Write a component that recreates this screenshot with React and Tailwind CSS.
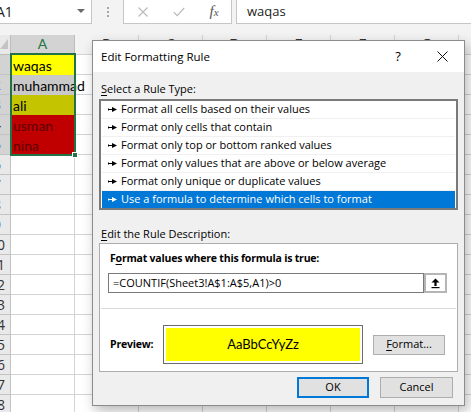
import React from 'react';

const rowNums = Array.from({ length: 18 }, (_, i) => i + 1);
const otherCols = ['B', 'C', 'D', 'E', 'F', 'G', 'H'];

// filled cells of column A
const cells = {
  1: { text: 'waqas', cls: 'bg-[#ffff00] border-[#ffff00] text-black' },
  2: { text: 'muhammad', cls: 'bg-[#c9c9c9] border-[#c9c9c9] text-black' },
  3: { text: 'ali', cls: 'bg-[#c4c400] border-[#c4c400] text-black' },
  4: { text: 'usman', cls: 'bg-[#c00000] border-[#c00000] text-[#5c0000]' },
  5: { text: 'nina', cls: 'bg-[#c00000] border-[#c00000] text-[#5c0000]' },
};

const rules = [
  'Format all cells based on their values',
  'Format only cells that contain',
  'Format only top or bottom ranked values',
  'Format only values that are above or below average',
  'Format only unique or duplicate values',
  'Use a formula to determine which cells to format',
];

const RuleArrow = () => (
  <svg width="9" height="7" viewBox="0 0 9 7" className="shrink-0">
    <rect x="0" y="2.5" width="1" height="2" fill="currentColor" />
    <rect x="0" y="3" width="5" height="1" fill="currentColor" />
    <path d="M4 1 L9 3.5 L4 6 Z" fill="currentColor" />
  </svg>
);

function Sheet() {
  return (
    <div className="relative flex flex-col font-['Lato','Liberation_Sans',sans-serif]">
      {/* column headers */}
      <div className="flex h-[20px] shrink-0">
        <div className="w-[11px] shrink-0 border-r border-b border-[#bdbdbd] bg-[#e9e9e9] flex items-center">
          <svg width="10" height="19" viewBox="0 0 10 19">
            <path d="M8 4 L8 14 L0 14 Z" fill="#c4c4c4" />
          </svg>
        </div>
        <div className="w-[64px] shrink-0 border-r border-b border-[#bdbdbd] bg-[#d3d3d3] text-center text-[14px] leading-[18px] text-[#217346]">
          A
        </div>
        {otherCols.map((c) => (
          <div
            key={c}
            className="w-[64px] shrink-0 border-r border-b border-[#d4d4d4] bg-[#f3f3f3] text-center text-[14px] leading-[18px] text-[#333]"
          >
            {c}
          </div>
        ))}
      </div>

      {rowNums.map((n) => {
        const cell = cells[n];
        return (
          <div key={n} className="flex h-[20px] shrink-0">
            <div
              className={`w-[11px] shrink-0 overflow-hidden border-r border-b border-[#c3c3c3] ${
                cell ? 'bg-[#d3d3d3]' : 'bg-[#e9e9e9]'
              }`}
            >
              <div className="w-[24px] -ml-[15px] text-center text-[14px] leading-[19px] text-[#333] font-['Open_Sans',sans-serif]">
                {n}
              </div>
            </div>
            <div
              className={`w-[64px] shrink-0 border-r border-b flex items-center ${
                cell ? cell.cls : 'border-[#d4d4d4]'
              }`}
            >
              {cell && (
                <span className="relative z-10 whitespace-nowrap pl-[2px] pt-[1px] text-[14px] leading-[19px]">
                  {cell.text}
                </span>
              )}
            </div>
            {otherCols.map((c) => (
              <div key={c} className="w-[64px] shrink-0 border-r border-b border-[#d4d4d4]" />
            ))}
          </div>
        );
      })}

      {/* selection A1:A5 */}
      <div className="absolute left-[10px] top-[18px] w-[66px] h-[103px] border-2 border-[#217346] z-20" />
      <div className="absolute left-[72px] top-[117px] w-[6px] h-[6px] bg-[#217346] border border-white z-20" />
    </div>
  );
}

function FormulaBar() {
  return (
    <div className="h-[35px] shrink-0 bg-[#f3f3f3] flex items-start font-['Open_Sans',sans-serif]">
      <div className="w-[92px] h-[24px] shrink-0 bg-white border-r border-b border-[#c6c6c6] flex items-center overflow-hidden">
        <span className="-ml-[4px] flex-1 text-[14px] text-[#222]">A1</span>
        <svg width="8" height="5" viewBox="0 0 8 5" className="mr-[6px]">
          <path d="M0 0 L8 0 L4 4 Z" fill="#6a6a6a" />
        </svg>
      </div>
      <div className="w-[31px] h-[24px] shrink-0 flex flex-col items-center justify-center gap-[2px]">
        <span className="w-[2px] h-[2px] bg-[#a6a6a6]" />
        <span className="w-[2px] h-[2px] bg-[#a6a6a6]" />
        <span className="w-[2px] h-[2px] bg-[#a6a6a6]" />
      </div>
      <div className="w-[109px] h-[24px] shrink-0 bg-white border-x border-b border-[#c6c6c6] flex items-center">
        <div className="w-[36px] flex justify-center ml-[1px]">
          <svg width="10" height="10" viewBox="0 0 10 10">
            <path d="M0.5 0.5 L9.5 9.5 M9.5 0.5 L0.5 9.5" stroke="#bcbcbc" strokeWidth="1.2" />
          </svg>
        </div>
        <div className="w-[36px] flex justify-center">
          <svg width="12" height="10" viewBox="0 0 12 10">
            <path d="M0.8 5.2 L4.2 8.6 L11.2 1" stroke="#bcbcbc" strokeWidth="1.3" fill="none" />
          </svg>
        </div>
        <div className="w-[34px] flex justify-center">
          <span className="italic font-['Liberation_Serif',serif] text-[15px] leading-none text-[#555]">
            f<span className="text-[11px]">x</span>
          </span>
        </div>
      </div>
      <div className="flex-1 h-[24px] ml-[4px] bg-white border-l border-b border-[#c6c6c6] flex items-center pl-[10px] text-[13px] text-[#222]">
        waqas
      </div>
    </div>
  );
}

function Dialog() {
  return (
    <div className="absolute left-[92px] top-[40px] w-[373px] h-[366px] border border-[#8c8c8c] bg-[#f0f0f0] shadow-[3px_5px_12px_rgba(0,0,0,0.28)] flex flex-col text-[11px] text-black font-['Open_Sans','Noto_Sans',sans-serif] z-30">
      {/* title bar */}
      <div className="h-[31px] shrink-0 bg-white flex items-center">
        <div className="flex-1 pl-[8px] text-[11.5px]">Edit Formatting Rule</div>
        <div className="w-[44px] text-center text-[13px] leading-none">?</div>
        <div className="w-[44px] flex justify-center">
          <svg width="11" height="11" viewBox="0 0 11 11">
            <path d="M0.5 0.5 L10.5 10.5 M10.5 0.5 L0.5 10.5" stroke="#111" strokeWidth="1" />
          </svg>
        </div>
      </div>

      <div className="flex flex-col px-[6px] pt-[9px]">
        <div className="ml-[2px] leading-[16px]">
          <span className="underline underline-offset-2">S</span>elect a Rule Type:
        </div>

        <div className="mt-[2px] border-2 border-[#7a7a7a] bg-white px-px">
          {rules.map((r, i) => {
            const last = i === rules.length - 1;
            return (
              <div
                key={r}
                className={`flex items-center gap-[4px] pl-[6px] ${
                  last ? 'h-[17px] bg-[#0078d7] text-white' : 'h-[18px] border-b border-[#f0f0f0]'
                }`}
              >
                <RuleArrow />
                <span className="whitespace-nowrap">{r}</span>
              </div>
            );
          })}
        </div>

        <div className="mt-[16px] ml-[2px] leading-[16px]">
          <span className="underline underline-offset-2">E</span>dit the Rule Description:
        </div>

        <div className="mt-[1px] border border-[#adadad] bg-white flex flex-col pb-[7px]">
          <div className="pt-[7px] pl-[10px] leading-[15px] font-bold text-[10.5px] tracking-[-0.2px]">
            F<span className="underline underline-offset-2">o</span>rmat values where this formula is true:
          </div>
          <div className="mt-[7px] pl-[8px] flex">
            <div className="w-[316px] h-[20px] border border-[#7a7a7a] bg-white flex items-center pl-[4px] whitespace-nowrap">
              =COUNTIF(Sheet3!A$1:A$5,A1)&gt;0
            </div>
            <div className="w-[23px] h-[20px] border-2 border-[#b5b5b5] bg-white flex items-center justify-center">
              <svg width="9" height="11" viewBox="0 0 9 11">
                <path d="M4.5 0.5 L8.5 4.5 L5.6 4.5 L5.6 8 L3.4 8 L3.4 4.5 L0.5 4.5 Z" fill="#000" />
                <rect x="0.5" y="9" width="8" height="1.2" fill="#000" />
              </svg>
            </div>
          </div>
          <div className="mt-[15px] mx-[1px] h-px bg-[#d9d9d9]" />
          <div className="mt-[16px] pl-[10px] flex items-center">
            <div className="w-[53px] font-bold text-[10.5px] tracking-[-0.2px]">Preview:</div>
            <div className="w-[200px] h-[39px] border border-[#6b6b6b] bg-white p-[2px]">
              <div className="w-full h-full bg-[#ffff00] flex items-center justify-center font-['Lato','Liberation_Sans',sans-serif] text-[13px]">
                AaBbCcYyZz
              </div>
            </div>
            <div className="ml-[10px] w-[72px] h-[20px] border border-[#adadad] bg-[#e1e1e1] flex items-center justify-center">
              <span className="underline underline-offset-2">F</span>ormat...
            </div>
          </div>
        </div>

        <div className="mt-[5px] mr-[5px] flex justify-end gap-[11px]">
          <div className="w-[72px] h-[21px] border-2 border-[#0078d7] bg-[#e1e1e1] flex items-center justify-center">
            OK
          </div>
          <div className="w-[73px] h-[21px] border border-[#adadad] bg-[#e1e1e1] flex items-center justify-center">
            Cancel
          </div>
        </div>
      </div>
    </div>
  );
}

export default function App() {
  return (
    <div className="relative w-[471px] h-[412px] overflow-hidden bg-white flex flex-col">
      <FormulaBar />
      <Sheet />
      <Dialog />
    </div>
  );
}
